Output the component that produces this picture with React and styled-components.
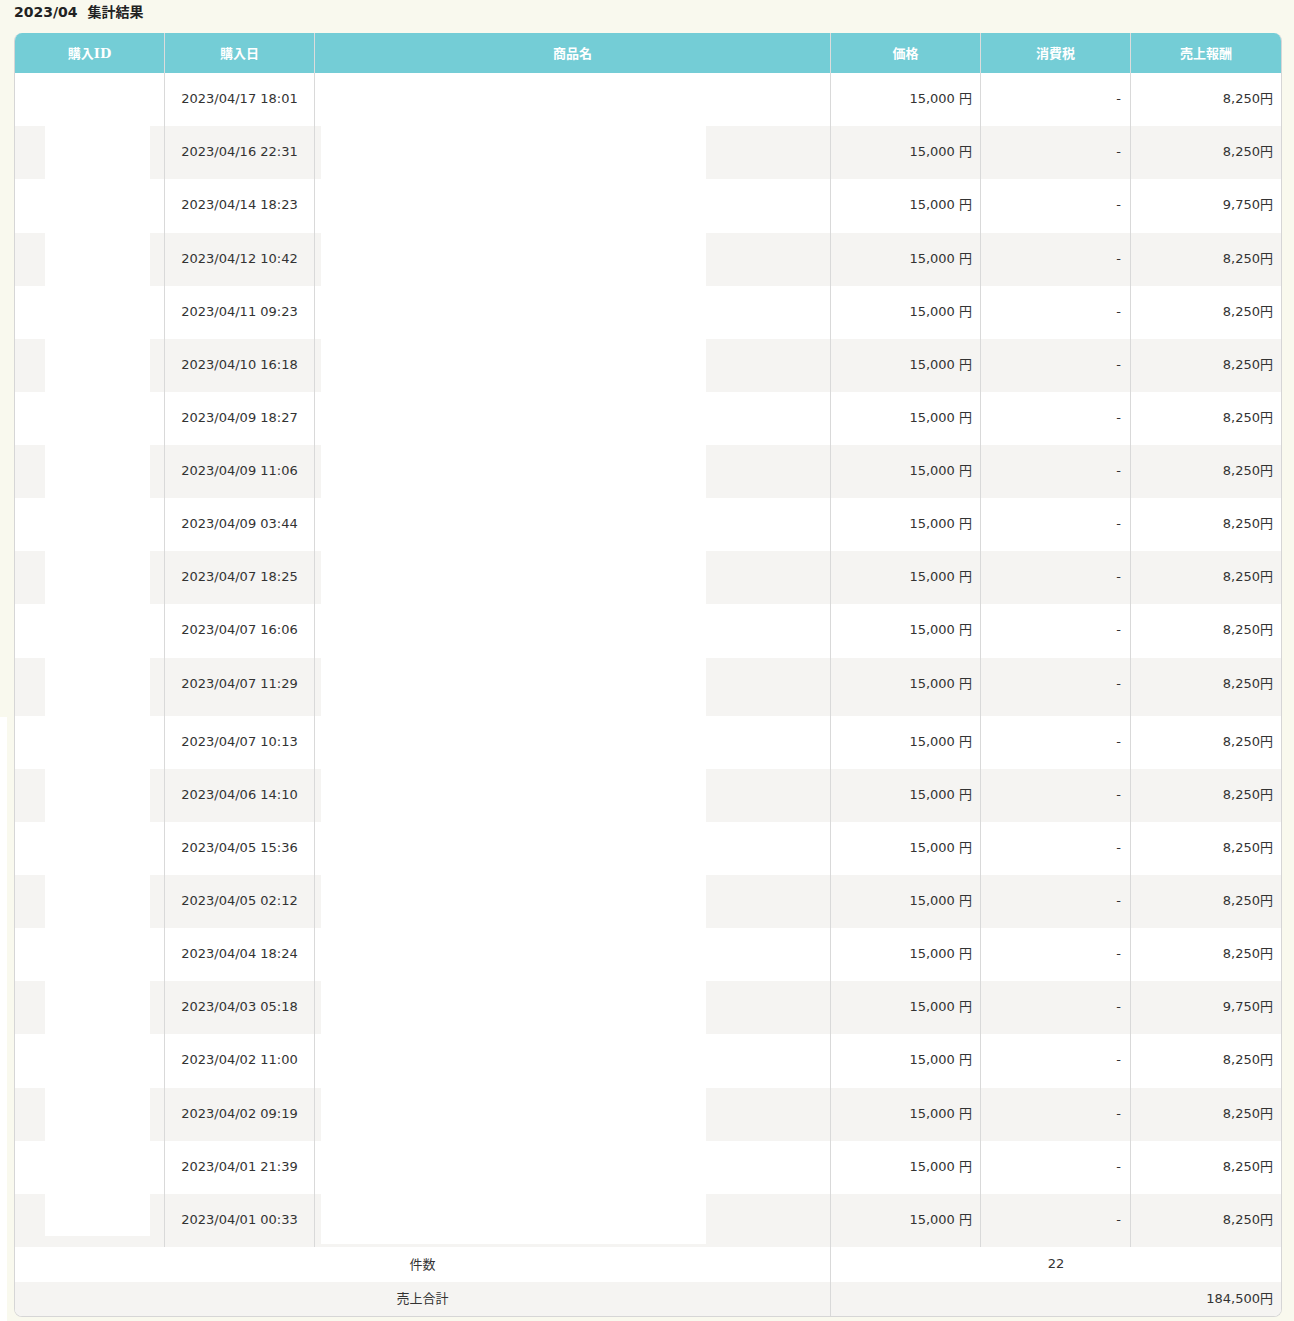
import React from "react";
import styled, { createGlobalStyle } from "styled-components";

const Global = createGlobalStyle`
  html, body { margin: 0; padding: 0; }
  body { background: #f9f9ee; }
`;

const Page = styled.div`
  min-height: 1321px;
  box-sizing: border-box;
  padding: 1px 12px 0 14px;
  background: linear-gradient(#fff, #fff) 0 717px / 7px 100% no-repeat, #f9f9ee;
  font-family: "DejaVu Sans", "Noto Sans CJK JP", sans-serif;
  color: #333;
`;

const Title = styled.h2`
  margin: 0 0 11px;
  font-size: 14px;
  line-height: 20px;
  font-weight: bold;
  color: #222;
`;

const TitleLabel = styled.span`
  margin-left: 10px;
  font-family: "Noto Sans CJK JP", sans-serif;
`;

const Table = styled.div`
  width: 1268px;
  box-sizing: border-box;
  border: 1px solid #d6d6d6;
  border-top: 0;
  border-radius: 8px;
  overflow: hidden;
  background: #fff;
`;

const COLS = "150px 150px 516px 150px 150px 150px";

const HeadRow = styled.div`
  display: grid;
  grid-template-columns: ${COLS};
  height: 40px;
  background: #74cdd6;
`;

const HeadCell = styled.div`
  display: flex;
  align-items: center;
  justify-content: center;
  padding-bottom: 2px;
  color: #fff;
  font-weight: bold;
  font-size: 13px;
  font-family: "DejaVu Serif", "Noto Sans CJK JP", serif;
  border-right: ${(p) => (p.$last ? "0" : "1px solid #dcdcdc")};
`;

const Row = styled.div`
  display: grid;
  grid-template-columns: ${COLS};
  height: ${(p) => p.$h}px;
  background: ${(p) => (p.$striped ? "#f5f4f2" : "#fff")};
`;

const Cell = styled.div`
  display: flex;
  align-items: flex-start;
  justify-content: ${(p) => p.$justify || "flex-start"};
  box-sizing: border-box;
  padding: 16px ${(p) => p.$pr || 0}px 0 ${(p) => p.$pl || 0}px;
  font-size: 13px;
  line-height: 20px;
  white-space: nowrap;
  border-right: ${(p) => (p.$last ? "0" : "1px solid #d9d9d9")};
`;

const RedactCell = styled.div`
  display: flex;
  align-items: flex-start;
  padding-left: ${(p) => p.$pl}px;
  border-right: 1px solid #d9d9d9;
`;

const Redact = styled.div`
  width: ${(p) => p.$w}px;
  height: ${(p) => (p.$h ? `${p.$h}px` : "100%")};
  background: #fff;
`;

const FootRow = styled.div`
  display: grid;
  grid-template-columns: 816px 450px;
  height: ${(p) => p.$h}px;
  background: ${(p) => (p.$striped ? "#f5f4f2" : "#fff")};
`;

const FootCell = styled.div`
  display: flex;
  align-items: center;
  justify-content: ${(p) => p.$justify || "center"};
  padding-right: ${(p) => p.$pr || 0}px;
  padding-bottom: 3px;
  font-size: 13px;
  border-right: ${(p) => (p.$divider ? "1px solid #d9d9d9" : "0")};
`;

const rows = [
  ["2023/04/17 18:01", "8,250円", 53],
  ["2023/04/16 22:31", "8,250円", 53],
  ["2023/04/14 18:23", "9,750円", 54],
  ["2023/04/12 10:42", "8,250円", 53],
  ["2023/04/11 09:23", "8,250円", 53],
  ["2023/04/10 16:18", "8,250円", 53],
  ["2023/04/09 18:27", "8,250円", 53],
  ["2023/04/09 11:06", "8,250円", 53],
  ["2023/04/09 03:44", "8,250円", 53],
  ["2023/04/07 18:25", "8,250円", 53],
  ["2023/04/07 16:06", "8,250円", 54],
  ["2023/04/07 11:29", "8,250円", 58],
  ["2023/04/07 10:13", "8,250円", 53],
  ["2023/04/06 14:10", "8,250円", 53],
  ["2023/04/05 15:36", "8,250円", 53],
  ["2023/04/05 02:12", "8,250円", 53],
  ["2023/04/04 18:24", "8,250円", 53],
  ["2023/04/03 05:18", "9,750円", 53],
  ["2023/04/02 11:00", "8,250円", 54],
  ["2023/04/02 09:19", "8,250円", 53],
  ["2023/04/01 21:39", "8,250円", 53],
  ["2023/04/01 00:33", "8,250円", 53],
];

const headers = ["購入ID", "購入日", "商品名", "価格", "消費税", "売上報酬"];

export default function App() {
  return (
    <>
      <Global />
      <Page>
        <Title>
          2023/04<TitleLabel>集計結果</TitleLabel>
        </Title>
        <Table>
          <HeadRow>
            {headers.map((h, i) => (
              <HeadCell key={h} $last={i === headers.length - 1}>
                {h}
              </HeadCell>
            ))}
          </HeadRow>
          {rows.map(([date, reward, h], i) => {
            const striped = i % 2 === 1;
            const last = i === rows.length - 1;
            return (
              <Row key={i} $h={h} $striped={striped}>
                <RedactCell $pl={30}>
                  {striped && <Redact $w={105} $h={last ? 42 : 0} />}
                </RedactCell>
                <Cell $justify="center">{date}</Cell>
                <RedactCell $pl={6}>
                  {striped && <Redact $w={385} $h={last ? 50 : 0} />}
                </RedactCell>
                <Cell $justify="flex-end" $pr={8}>15,000 円</Cell>
                <Cell $justify="flex-end" $pr={9}>-</Cell>
                <Cell $justify="flex-end" $pr={8} $last>{reward}</Cell>
              </Row>
            );
          })}
          <FootRow $h={35}>
            <FootCell $divider>件数</FootCell>
            <FootCell>22</FootCell>
          </FootRow>
          <FootRow $h={34} $striped>
            <FootCell $divider>売上合計</FootCell>
            <FootCell $justify="flex-end" $pr={8}>184,500円</FootCell>
          </FootRow>
        </Table>
      </Page>
    </>
  );
}
